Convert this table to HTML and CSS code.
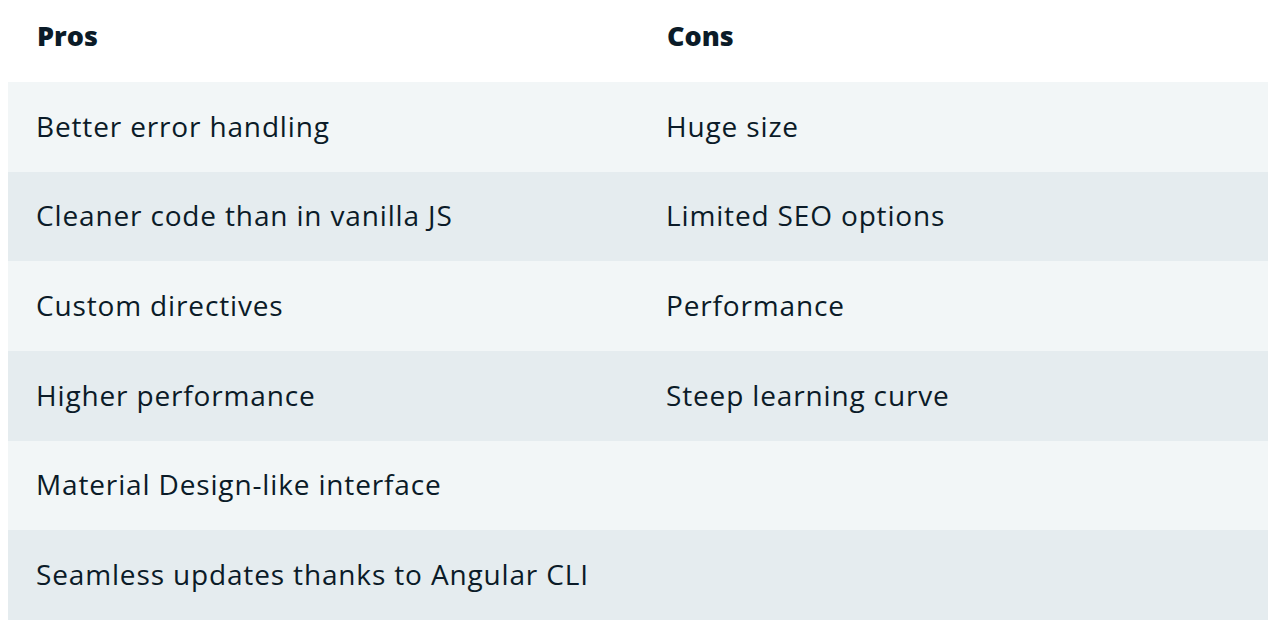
FILE: index.html
```html
<!DOCTYPE html>
<html>
<head>
<meta charset="utf-8">
<link rel="stylesheet" href="styles.css">
</head>
<body>
<div class="table">
  <div class="row head"><div class="cell">Pros</div><div class="cell">Cons</div></div>
  <div class="row light"><div class="cell">Better error handling</div><div class="cell">Huge size</div></div>
  <div class="row dark"><div class="cell">Cleaner code than in vanilla JS</div><div class="cell">Limited SEO options</div></div>
  <div class="row light"><div class="cell">Custom directives</div><div class="cell">Performance</div></div>
  <div class="row dark"><div class="cell">Higher performance</div><div class="cell">Steep learning curve</div></div>
  <div class="row light"><div class="cell">Material Design-like interface</div><div class="cell"></div></div>
  <div class="row dark"><div class="cell">Seamless updates thanks to Angular CLI</div><div class="cell"></div></div>
</div>
</body>
</html>
```
FILE: styles.css
```css
html, body {
  margin: 0;
  padding: 0;
  background: #ffffff;
}
body {
  padding: 0 16px 0 8px;
  font-family: "Open Sans", sans-serif;
  color: #0b1b28;
}
.table {
  display: flex;
  flex-direction: column;
}
.row {
  display: grid;
  grid-template-columns: 1fr 1fr;
  height: 89.67px;
  align-items: center;
}
.row.head {
  height: 82px;
  align-items: start;
}
.cell {
  padding-left: 28px;
  padding-bottom: 2px;
  font-size: 28px;
  line-height: 36px;
  letter-spacing: 0.85px;
}
.head .cell {
  font-size: 27px;
  font-weight: 800;
  padding-top: 18px;
  padding-bottom: 0;
  padding-left: 29px;
  letter-spacing: 0;
}
.light { background: #f2f6f7; }
.dark { background: #e5ecef; }
```
